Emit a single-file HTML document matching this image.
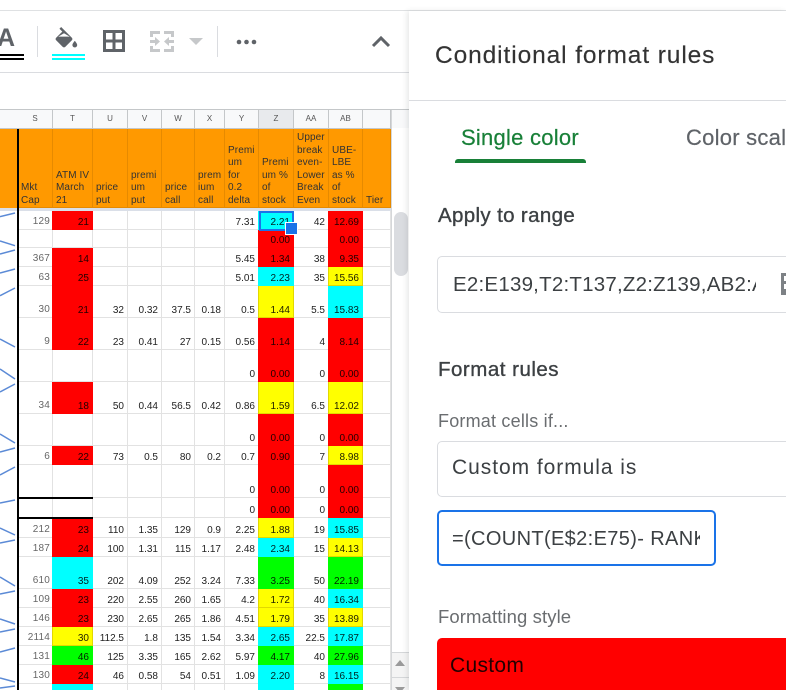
<!DOCTYPE html>
<html><head><meta charset="utf-8"><style>
html,body{margin:0;padding:0;background:#fff;}
#p{position:relative;width:786px;height:690px;overflow:hidden;background:#fff;font-family:"Liberation Sans",sans-serif;}
.a{position:absolute;}
.l{position:absolute;white-space:nowrap;}
table{position:absolute;left:18px;top:129px;border-collapse:separate;border-spacing:0;table-layout:fixed;width:373px;font-size:10px;line-height:12px;color:#222;}
td{box-sizing:border-box;border-right:1px solid #e2e2e2;border-bottom:1px solid #e2e2e2;text-align:right;vertical-align:bottom;padding:0 3px 0 0;overflow:hidden;white-space:nowrap;}
td:first-child{color:#666;padding:0 2px 1px 0;letter-spacing:.2px;}
.r{background:#f00;border-color:#f00;color:#200;box-shadow:-1px 0 0 #f00;}
.c{background:#0ff;border-color:#0ff;color:#022;box-shadow:-1px 0 0 #0ff;}
.y{background:#ff0;border-color:#e2d800;color:#220;box-shadow:-1px 0 0 #e2d800;}
.g{background:#0f0;border-color:#0f0;color:#020;box-shadow:-1px 0 0 #0f0;}
tr.h td{background:#f90;border-color:#e68a00;text-align:left;padding:0 0 0 3px;line-height:12.5px;color:#333;letter-spacing:.1px;height:79px;}
.ch{position:absolute;top:110px;height:18px;line-height:18px;font-size:8px;text-align:center;color:#555;background:#f8f9fa;border-right:1px solid #c4c7c9;box-sizing:border-box;}
.m{-webkit-text-stroke:.35px currentColor;}
</style></head><body><div id="p">
<!-- top lines -->
<div class="a" style="left:0;top:10px;width:786px;height:1px;background:#dfe1e3"></div>
<div class="a" style="left:0;top:72px;width:409px;height:1px;background:#dadce0"></div>
<div class="a" style="left:0;top:109px;width:409px;height:1px;background:#c4c7c9"></div>
<div class="a" style="left:0;top:110px;width:409px;height:18px;background:#f8f9fa"></div>

<!-- toolbar -->
<div class="l" style="left:-3px;top:24px;font-size:25px;line-height:28px;color:#5f6368;font-weight:bold;">A</div>
<div class="a" style="left:0;top:54px;width:24px;height:2px;background:#000"></div>
<div class="a" style="left:0;top:58px;width:24px;height:2px;background:#000"></div>
<div class="a" style="left:37px;top:26px;width:1px;height:31px;background:#dadce0"></div>
<svg class="a" style="left:52px;top:27px" width="30" height="22" viewBox="0 0 25 18.3"><path fill="#5f6368" d="M16.56 8.94L7.62 0 6.21 1.41l2.38 2.38-5.15 5.15c-.59.59-.59 1.54 0 2.12l5.5 5.5c.29.29.68.44 1.06.44s.77-.15 1.06-.44l5.5-5.5c.59-.58.59-1.53 0-2.12zM5.21 8L10 5.21 14.79 8H5.21zM19 11.5s-2 2.17-2 3.5c0 1.1.9 2 2 2s2-.9 2-2c0-1.33-2-3.5-2-3.5z"/></svg>
<div class="a" style="left:52px;top:54px;width:33px;height:2px;background:#0ff"></div>
<div class="a" style="left:52px;top:58px;width:33px;height:2px;background:#0ff"></div>
<svg class="a" style="left:103px;top:30px" width="22" height="22"><path fill="#5f6368" fill-rule="evenodd" d="M0 0h22v22H0zM3 3v6.500h6.500V3zM12.500 3v6.500H19V3zM3 12.500V19h6.500v-6.500zM12.500 12.500V19H19v-6.500z"/></svg>
<svg class="a" style="left:149px;top:30px" width="27" height="24"><g fill="#c6c8ca"><path d="M1 1h10v3H4v3H1zM15 1h10v6h-3V4h-7zM1 16h3v3h7v3H1zM22 16h3v6H15v-3h7z"/><path d="M1 10h5V7l5 4.500-5 4.500v-3H1zM25 10h-5V7l-5 4.500 5 4.500v-3h5z"/></g></svg>
<svg class="a" style="left:189px;top:38px" width="14" height="8"><path fill="#c6c8ca" d="M0 0h14L7 7z"/></svg>
<div class="a" style="left:217px;top:26px;width:1px;height:31px;background:#dadce0"></div>
<svg class="a" style="left:235px;top:38px" width="23" height="8"><g fill="#5f6368"><circle cx="4" cy="4" r="2.300"/><circle cx="11.500" cy="4" r="2.300"/><circle cx="19" cy="4" r="2.300"/></g></svg>
<svg class="a" style="left:371px;top:34px" width="20" height="14"><path fill="none" stroke="#5f6368" stroke-width="3" d="M2 12l8-8 8 8"/></svg>

<!-- column headers -->
<div class="ch" style="left:18px;width:35px">S</div>
<div class="ch" style="left:53px;width:40px">T</div>
<div class="ch" style="left:93px;width:35px">U</div>
<div class="ch" style="left:128px;width:34px">V</div>
<div class="ch" style="left:162px;width:33px">W</div>
<div class="ch" style="left:195px;width:30px">X</div>
<div class="ch" style="left:225px;width:34px">Y</div>
<div class="ch" style="left:259px;width:35px;background:#e8eaed">Z</div>
<div class="ch" style="left:294px;width:35px">AA</div>
<div class="ch" style="left:329px;width:34px">AB</div>
<div class="ch" style="left:363px;width:28px"></div>
<div class="a" style="left:0;top:128px;width:391px;height:1px;background:#c4c7c9"></div>
<div class="a" style="left:0;top:129px;width:17px;height:79px;background:#f90"></div>

<table>
<colgroup><col style="width:35px"><col style="width:40px"><col style="width:35px"><col style="width:34px"><col style="width:33px"><col style="width:30px"><col style="width:34px"><col style="width:35px"><col style="width:35px"><col style="width:34px"><col style="width:28px"></colgroup>
<tr class="h"><td style="color:#333;letter-spacing:.1px;padding:0 0 0 3px">Mkt<br>Cap</td><td>ATM IV<br>March<br>21</td><td>price<br>put</td><td>premi<br>um<br>put</td><td>price<br>call</td><td>prem<br>ium<br>call</td><td>Premi<br>um<br>for<br>0.2<br>delta</td><td>Premi<br>um %<br>of<br>stock</td><td>Upper<br>break<br>even-<br>Lower<br>Break<br>Even</td><td>UBE-<br>LBE<br>as %<br>of<br>stock</td><td>Tier</td></tr>
<tr style="height:3px"><td colspan="11" style="background:#dadfe8;border:0;padding:0;line-height:0;font-size:0;height:3px"></td></tr>
<tr style="height:19px"><td>129</td><td class="r">21</td><td></td><td></td><td></td><td></td><td>7.31</td><td class="c">2.21</td><td>42</td><td class="r">12.69</td><td></td></tr>
<tr style="height:18px"><td></td><td></td><td></td><td></td><td></td><td></td><td></td><td class="r">0.00</td><td></td><td class="r">0.00</td><td></td></tr>
<tr style="height:19px"><td>367</td><td class="r">14</td><td></td><td></td><td></td><td></td><td>5.45</td><td class="r">1.34</td><td>38</td><td class="r">9.35</td><td></td></tr>
<tr style="height:19px"><td>63</td><td class="r">25</td><td></td><td></td><td></td><td></td><td>5.01</td><td class="c">2.23</td><td>35</td><td class="y">15.56</td><td></td></tr>
<tr style="height:32px"><td>30</td><td class="r">21</td><td>32</td><td>0.32</td><td>37.5</td><td>0.18</td><td>0.5</td><td class="y">1.44</td><td>5.5</td><td class="c">15.83</td><td></td></tr>
<tr style="height:32px"><td>9</td><td class="r">22</td><td>23</td><td>0.41</td><td>27</td><td>0.15</td><td>0.56</td><td class="r">1.14</td><td>4</td><td class="r">8.14</td><td></td></tr>
<tr style="height:32px"><td></td><td></td><td></td><td></td><td></td><td></td><td>0</td><td class="r">0.00</td><td>0</td><td class="r">0.00</td><td></td></tr>
<tr style="height:32px"><td>34</td><td class="r">18</td><td>50</td><td>0.44</td><td>56.5</td><td>0.42</td><td>0.86</td><td class="y">1.59</td><td>6.5</td><td class="y">12.02</td><td></td></tr>
<tr style="height:32px"><td></td><td></td><td></td><td></td><td></td><td></td><td>0</td><td class="r">0.00</td><td>0</td><td class="r">0.00</td><td></td></tr>
<tr style="height:19px"><td>6</td><td class="r">22</td><td>73</td><td>0.5</td><td>80</td><td>0.2</td><td>0.7</td><td class="r">0.90</td><td>7</td><td class="y">8.98</td><td></td></tr>
<tr style="height:33px"><td></td><td></td><td></td><td></td><td></td><td></td><td>0</td><td class="r">0.00</td><td>0</td><td class="r">0.00</td><td></td></tr>
<tr style="height:20px"><td></td><td></td><td></td><td></td><td></td><td></td><td>0</td><td class="r">0.00</td><td>0</td><td class="r">0.00</td><td></td></tr>
<tr style="height:20px"><td>212</td><td class="r">23</td><td>110</td><td>1.35</td><td>129</td><td>0.9</td><td>2.25</td><td class="y">1.88</td><td>19</td><td class="c">15.85</td><td></td></tr>
<tr style="height:19px"><td>187</td><td class="r">24</td><td>100</td><td>1.31</td><td>115</td><td>1.17</td><td>2.48</td><td class="c">2.34</td><td>15</td><td class="y">14.13</td><td></td></tr>
<tr style="height:32px"><td>610</td><td class="c">35</td><td>202</td><td>4.09</td><td>252</td><td>3.24</td><td>7.33</td><td class="g">3.25</td><td>50</td><td class="g">22.19</td><td></td></tr>
<tr style="height:19px"><td>109</td><td class="r">23</td><td>220</td><td>2.55</td><td>260</td><td>1.65</td><td>4.2</td><td class="y">1.72</td><td>40</td><td class="c">16.34</td><td></td></tr>
<tr style="height:19px"><td>146</td><td class="r">23</td><td>230</td><td>2.65</td><td>265</td><td>1.86</td><td>4.51</td><td class="y">1.79</td><td>35</td><td class="y">13.89</td><td></td></tr>
<tr style="height:19px"><td>2114</td><td class="y">30</td><td>112.5</td><td>1.8</td><td>135</td><td>1.54</td><td>3.34</td><td class="c">2.65</td><td>22.5</td><td class="c">17.87</td><td></td></tr>
<tr style="height:19px"><td>131</td><td class="g">46</td><td>125</td><td>3.35</td><td>165</td><td>2.62</td><td>5.97</td><td class="g">4.17</td><td>40</td><td class="g">27.96</td><td></td></tr>
<tr style="height:19px"><td>130</td><td class="r">24</td><td>46</td><td>0.58</td><td>54</td><td>0.51</td><td>1.09</td><td class="c">2.20</td><td>8</td><td class="c">16.15</td><td></td></tr>
<tr style="height:19px"><td></td><td class="c"></td><td></td><td></td><td></td><td></td><td></td><td class="c"></td><td></td><td class="g"></td><td></td></tr>
</table>

<!-- frozen band left, black lines -->
<div class="a" style="left:0;top:208px;width:18px;height:3px;background:#dadfe8"></div>
<div class="a" style="left:17px;top:129px;width:1.500px;height:561px;background:#000"></div>
<div class="a" style="left:17px;top:497px;width:76px;height:2px;background:#000"></div>
<div class="a" style="left:17px;top:517px;width:76px;height:1.500px;background:#000"></div>
<div class="a" style="left:391px;top:110px;width:1px;height:580px;background:#d5d7d9"></div>

<!-- sparklines -->
<svg class="a" style="left:0;top:0" width="16" height="690"><path fill="none" stroke="#5b8ad6" stroke-width="1.500" d="M0 216.700L15 213M0 241L15 245.700M0 254L15 250M0 273L15 269M0 295.700L15 288M0 339L15 347M0 369L15 379M0 392L15 384M0 434L15 443M0 452L15 448M0 475L15 467M0 503L15 500M0 528L15 535M0 543L15 540M0 577L15 586M0 594L15 591M0 619L15 624M0 632L15 629M0 652L15 648M0 678L15 682M0 688L15 686"/></svg>

<!-- selection -->
<div class="a" style="left:259px;top:211px;width:35px;height:20px;box-sizing:border-box;border:2.500px solid #1a73e8;"></div>
<div class="a" style="left:285px;top:222px;width:13px;height:13px;box-sizing:border-box;border:1px solid #fff;background:#1a73e8;"></div>

<!-- scrollbar -->
<div class="a" style="left:392px;top:207px;width:17px;height:483px;background:#fff"></div>
<div class="a" style="left:394px;top:212px;width:14px;height:64px;border-radius:7px;background:#dadce0"></div>
<div class="a" style="left:392px;top:652px;width:17px;height:38px;background:#f4f4f4;border-top:1px solid #d5d7d9;box-sizing:border-box"></div>
<div class="a" style="left:392px;top:677px;width:17px;height:1px;background:#d5d7d9"></div>
<svg class="a" style="left:395px;top:660px" width="10" height="7"><path fill="#9a9a9a" d="M5 0l5 6H0z"/></svg>
<svg class="a" style="left:395px;top:687px" width="10" height="3"><path fill="#9a9a9a" d="M0 0h10L7.500 3h-5z"/></svg>

<!-- panel -->
<div class="a" style="left:409px;top:11px;width:377px;height:679px;background:#fff;box-shadow:-2px 0 5px rgba(60,64,67,.12);overflow:hidden">
<div class="a" style="left:0;top:89px;width:377px;height:1px;background:#dadce0"></div>
</div>
<div class="l" style="left:435px;top:41px;font-size:24.500px;line-height:30px;letter-spacing:.9px;color:#333;-webkit-text-stroke:.15px #333;">Conditional format rules</div>
<div class="l" style="left:461px;top:124px;font-size:22px;line-height:28px;letter-spacing:.25px;color:#188038;-webkit-text-stroke:.2px #188038;">Single color</div>
<div class="a" style="left:455px;top:159px;width:131px;height:4px;background:#188038;border-radius:3px 3px 0 0"></div>
<div class="l" style="left:686px;top:124px;font-size:22px;line-height:28px;letter-spacing:.25px;color:#5f6368;-webkit-text-stroke:.2px #5f6368;width:100px;overflow:hidden">Color scale</div>

<div class="l m" style="left:438px;top:203px;font-size:20.500px;line-height:26px;letter-spacing:.35px;color:#3c4043">Apply to range</div>
<div class="a" style="left:437px;top:256px;width:380px;height:57px;box-sizing:border-box;border:1px solid #dadce0;border-radius:5px"></div>
<div class="l" style="left:453px;top:271px;width:303px;overflow:hidden;font-size:20.500px;line-height:27px;letter-spacing:.22px;color:#3c4043">E2:E139,T2:T137,Z2:Z139,AB2:AB139</div>
<svg class="a" style="left:780px;top:272px" width="6" height="24"><path fill="#7d8185" d="M1 1h6v22H1z"/><path fill="#fff" d="M4 4h3v5H4zM4 12h3v5H4z"/></svg>

<div class="l m" style="left:438px;top:357px;font-size:20.500px;line-height:26px;letter-spacing:.5px;color:#3c4043">Format rules</div>
<div class="l" style="left:438px;top:409px;font-size:18px;line-height:25px;letter-spacing:.2px;color:#6a6d70">Format cells if...</div>
<div class="a" style="left:437px;top:441px;width:380px;height:56px;box-sizing:border-box;border:1px solid #dadce0;border-radius:5px"></div>
<div class="l" style="left:452px;top:454px;font-size:21px;line-height:28px;letter-spacing:.95px;color:#3c4043">Custom formula is</div>
<div class="a" style="left:437px;top:510px;width:279px;height:56px;box-sizing:border-box;border:2.500px solid #1a73e8;border-radius:5px"></div>
<div class="l" style="left:452px;top:525px;width:248px;overflow:hidden;font-size:20px;line-height:28px;letter-spacing:.36px;color:#3c4043">=(COUNT(E$2:E75)- RANK(E2,E$2:E75))</div>
<div class="l" style="left:438px;top:604px;font-size:18.500px;line-height:25px;letter-spacing:.1px;color:#6a6d70">Formatting style</div>
<div class="a" style="left:437px;top:638px;width:380px;height:60px;background:#f00;border-radius:5px 5px 0 0"></div>
<div class="l" style="left:450px;top:652px;font-size:21px;line-height:28px;letter-spacing:.3px;color:#200">Custom</div>
</div></body></html>
